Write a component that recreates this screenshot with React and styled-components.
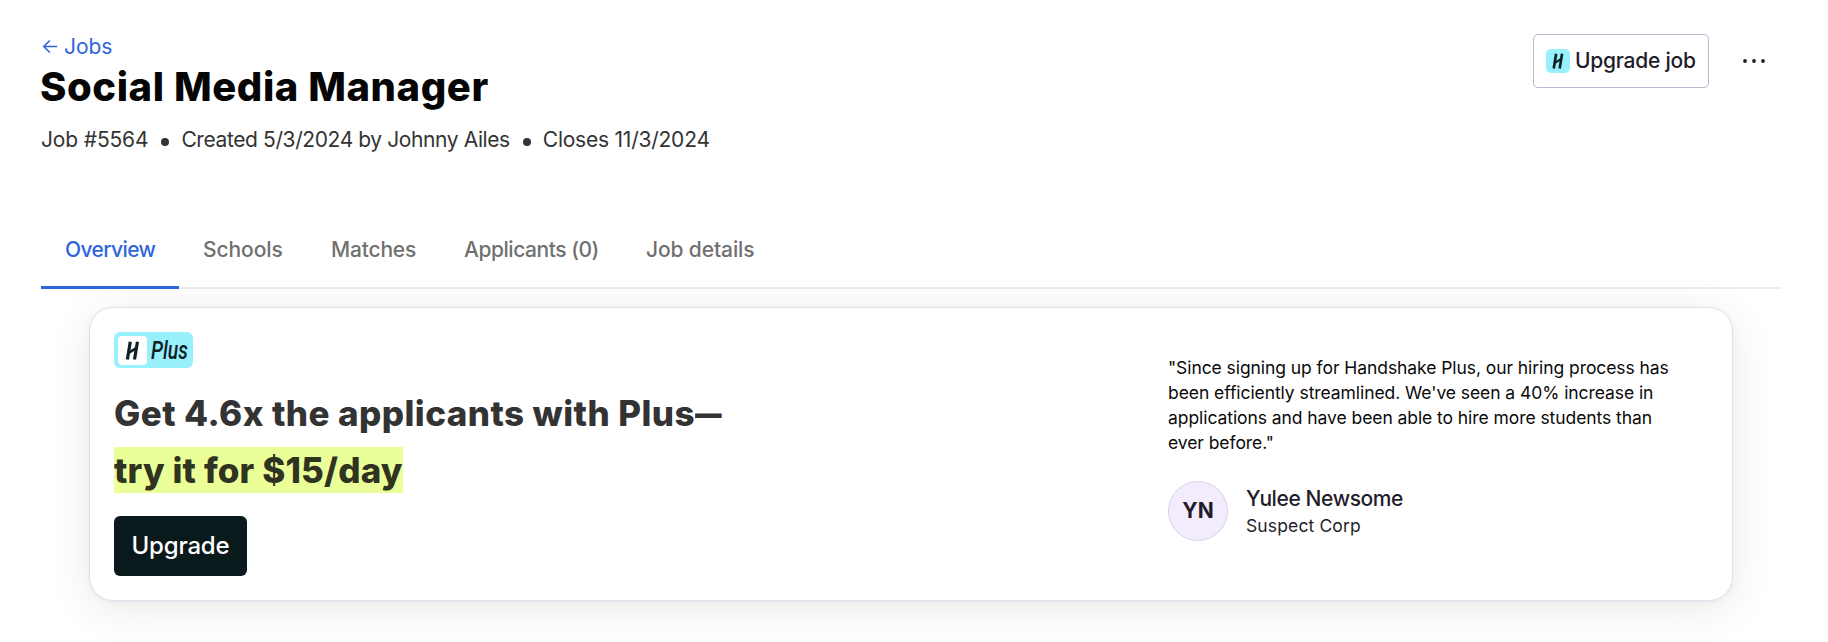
import styled, { createGlobalStyle } from 'styled-components'

const GlobalStyle = createGlobalStyle`
  * {
    box-sizing: border-box;
  }
  body {
    margin: 0;
    background: #fff;
    font-family: Inter, 'Liberation Sans', sans-serif;
    font-size: 21px;
    line-height: 28px;
  }
  h1, h2, p {
    margin: 0;
  }
  button {
    font-family: inherit;
    cursor: pointer;
  }
`

const tabs = [
  { label: 'Overview', width: 138, spacing: -0.63, active: true },
  { label: 'Schools', width: 128, spacing: -0.08 },
  { label: 'Matches', width: 133, spacing: -0.19 },
  { label: 'Applicants (0)', width: 182, spacing: -0.46 },
  { label: 'Job details', width: 156, spacing: -0.12 },
]

const HandshakeMark = ({ size }) => (
  <svg width={size} height={size} viewBox="0 0 30 30" fill="none" aria-hidden="true">
    <g stroke="#0f2024" strokeWidth="3.3">
      <path d="M12.7 6 L9.7 24.4" />
      <path d="M20.1 6 L17.1 24.4" />
      <path d="M11 17.4 L18.8 12.6" strokeWidth="2.8" />
    </g>
  </svg>
)

const PlusLogo = () => (
  <PlusBadge>
    <MarkTile>
      <HandshakeMark size={29} />
    </MarkTile>
    <PlusWord>Plus</PlusWord>
  </PlusBadge>
)

const App = () => {
  return (
    <Page>
      <GlobalStyle />
      <Header>
        <div>
          <BackLink href="#jobs">
            <svg width="16" height="16" viewBox="0 0 16 16" fill="none" aria-hidden="true">
              <path
                d="M15.2 7.5H1.8M7.8 1.5L1.8 7.5l6 6"
                stroke="currentColor"
                strokeWidth="1.6"
              />
            </svg>
            Jobs
          </BackLink>
          <Title>Social Media Manager</Title>
          <Meta>
            <MetaItem $spacing={-0.15}>Job #5564</MetaItem>
            <Dot />
            <MetaItem $spacing={-0.4}>Created 5/3/2024 by Johnny Ailes</MetaItem>
            <Dot />
            <MetaItem $spacing={-0.23}>Closes 11/3/2024</MetaItem>
          </Meta>
        </div>
        <Actions>
          <UpgradeJob>
            <MarkBadge>
              <HandshakeMark size={24} />
            </MarkBadge>
            <span>Upgrade job</span>
          </UpgradeJob>
          <MoreButton aria-label="More">
            <svg width="24" height="6" viewBox="0 0 24 6" fill="#1f1d2b">
              <circle cx="3" cy="3" r="1.9" />
              <circle cx="12" cy="3" r="1.9" />
              <circle cx="21" cy="3" r="1.9" />
            </svg>
          </MoreButton>
        </Actions>
      </Header>

      <Tabs>
        {tabs.map(({ label, width, spacing, active }) => (
          <Tab key={label} $width={width} $spacing={spacing} $active={active}>
            {label}
          </Tab>
        ))}
      </Tabs>

      <Card>
        <Offer>
          <PlusLogo />
          <Headline>
            Get 4.6x the applicants with Plus<Dash>—</Dash>
            <br />
            <Highlight>try it for $15/day</Highlight>
          </Headline>
          <UpgradeButton>Upgrade</UpgradeButton>
        </Offer>
        <Testimonial>
          <Quote>
            "Since signing up for Handshake Plus, our hiring process has been
            efficiently streamlined. We've seen a 40% increase in applications
            and have been able to hire more students than ever before."
          </Quote>
          <Person>
            <Avatar>YN</Avatar>
            <div>
              <Name>Yulee Newsome</Name>
              <Company>Suspect Corp</Company>
            </div>
          </Person>
        </Testimonial>
      </Card>
    </Page>
  )
}

export default App

const Page = styled.main`
  width: 1828px;
  height: 642px;
  overflow: hidden;
  padding: 33px 47px 0 41px;
`

const Header = styled.header`
  display: flex;
  justify-content: space-between;
  align-items: flex-start;
`

const BackLink = styled.a`
  display: flex;
  align-items: center;
  width: fit-content;
  gap: 6px;
  padding-left: 1px;
  color: #2f66dc;
  letter-spacing: -0.1px;
  text-decoration: none;
`

const Title = styled.h1`
  margin: 2px 0 0 -1px;
  color: #050505;
  font-size: 40px;
  font-weight: 800;
  line-height: 48px;
  letter-spacing: 0.57px;
`

const Meta = styled.div`
  display: flex;
  align-items: center;
  margin-top: 15px;
  color: #333;
`

const MetaItem = styled.span`
  letter-spacing: ${({ $spacing }) => $spacing}px;
`

const Dot = styled.span`
  width: 8px;
  height: 8px;
  margin: 3px 12px 0 13px;
  border-radius: 50%;
  background: #333;
`

const Actions = styled.div`
  display: flex;
  align-items: center;
  gap: 33px;
  margin: 1px 15px 0 0;
`

const UpgradeJob = styled.button`
  display: flex;
  align-items: center;
  gap: 5px;
  width: 176px;
  height: 54px;
  padding: 0 12px;
  border: 1px solid #bbb8cf;
  border-radius: 5px;
  background: #fff;
  color: #1f1d2b;
  font-size: 21px;
  font-weight: 500;
  letter-spacing: -0.24px;
  white-space: nowrap;

  span {
    padding-bottom: 2px;
  }
`

const MarkBadge = styled.i`
  display: flex;
  width: 24px;
  height: 24px;
  border-radius: 5px;
  background: #98f0fd;
`

const MoreButton = styled.button`
  display: flex;
  padding: 0;
  border: 0;
  background: none;
`

const Tabs = styled.nav`
  display: flex;
  height: 78px;
  margin-top: 57px;
  box-shadow: inset 0 -2px #ededed;
`

const Tab = styled.a`
  width: ${({ $width }) => $width}px;
  padding: 25px 0 0 24px;
  border-bottom: 3px solid ${({ $active }) => ($active ? '#2f66dc' : 'transparent')};
  color: ${({ $active }) => ($active ? '#2f66dc' : '#707070')};
  font-weight: 500;
  letter-spacing: ${({ $spacing }) => $spacing}px;
  white-space: nowrap;
`

const Card = styled.section`
  display: flex;
  justify-content: space-between;
  width: 1644px;
  height: 294px;
  margin: 18px 0 0 48px;
  padding: 24px;
  border: 1px solid #e0dff0;
  border-radius: 24px;
  background: #fff;
  box-shadow: 0 8px 44px rgba(0, 0, 0, 0.09), 0 1px 5px rgba(0, 0, 0, 0.05);
`

const Offer = styled.div`
  display: flex;
  flex-direction: column;
  align-items: flex-start;
`

const PlusBadge = styled.div`
  display: flex;
  align-items: center;
  gap: 4px;
  width: 79px;
  height: 36px;
  padding-left: 4px;
  border-radius: 6px;
  background: #98f0fd;
`

const MarkTile = styled.div`
  display: flex;
  flex: none;
  width: 29px;
  height: 29px;
  border-radius: 4px;
  background: #fff;
`

const PlusWord = styled.span`
  color: #0f2024;
  font-family: Roboto, sans-serif;
  font-size: 25.5px;
  font-style: italic;
  font-weight: 500;
  line-height: 36px;
  transform: scaleX(0.76);
  transform-origin: left;
`

const Headline = styled.h2`
  margin-top: 17px;
  color: #333;
  font-size: 35px;
  font-weight: 800;
  line-height: 57px;
  letter-spacing: 0.42px;
  white-space: nowrap;
`

const Dash = styled.span`
  display: inline-block;
  transform: scaleX(0.76);
  transform-origin: left;
`

const Highlight = styled.span`
  padding: 2px 0;
  background: #ebff99;
  color: #30331f;
  letter-spacing: 0.15px;
`

const UpgradeButton = styled.button`
  width: 133px;
  height: 60px;
  margin-top: 17px;
  padding: 0 0 2px;
  border: 0;
  border-radius: 6px;
  background: #0a191c;
  color: #fff;
  font-size: 24px;
  font-weight: 500;
  letter-spacing: -0.19px;
`

const Testimonial = styled.div`
  width: 540px;
  padding-top: 23px;
`

const Quote = styled.p`
  max-width: 518px;
  color: #0a0a0a;
  font-size: 17.5px;
  line-height: 25px;
  letter-spacing: -0.07px;
`

const Person = styled.div`
  display: flex;
  align-items: center;
  gap: 18px;
  margin-top: 26px;
`

const Avatar = styled.div`
  display: grid;
  place-items: center;
  width: 60px;
  height: 60px;
  border: 1px solid #d9cff0;
  border-radius: 50%;
  background: #f3ecfd;
  color: #1f1d2b;
  font-weight: 700;
`

const Name = styled.p`
  padding-top: 2px;
  color: #1f1d2b;
  font-weight: 500;
  letter-spacing: -0.4px;
`

const Company = styled.p`
  color: #1f1d2b;
  font-size: 17.5px;
  line-height: 26px;
  letter-spacing: 0.13px;
`
